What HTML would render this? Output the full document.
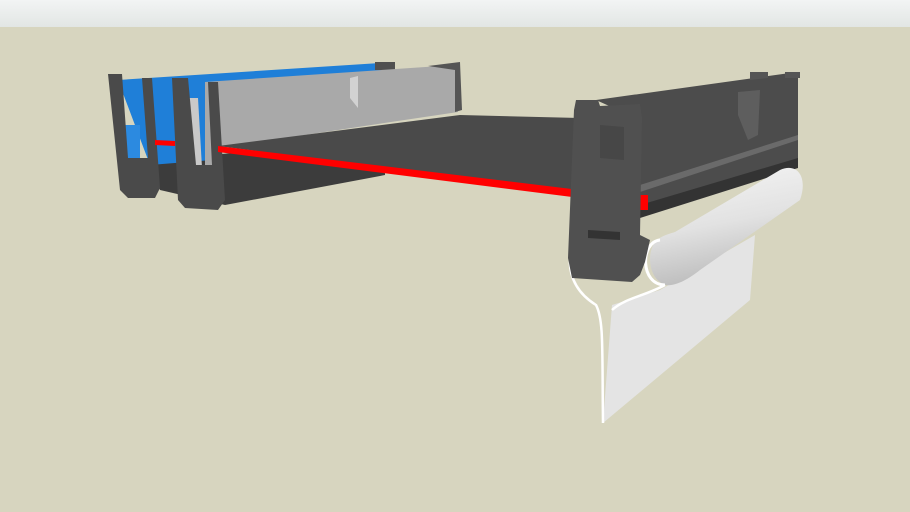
<!DOCTYPE html>
<html><head><style>html,body{margin:0;padding:0;width:910px;height:512px;overflow:hidden;background:#d7d5bf}</style></head>
<body>
<svg width="910" height="512" viewBox="0 0 910 512" xmlns="http://www.w3.org/2000/svg">
<defs>
<linearGradient id="sky" x1="0" y1="0" x2="0" y2="1"><stop offset="0" stop-color="#f2f4f4"/><stop offset="1" stop-color="#e2e6e4"/></linearGradient>
<linearGradient id="tube" x1="0" y1="0" x2="0.25" y2="1"><stop offset="0" stop-color="#f6f6f6"/><stop offset="0.55" stop-color="#e2e2e2"/><stop offset="1" stop-color="#bdbdbd"/></linearGradient>
</defs>
<rect x="0" y="0" width="910" height="27" fill="url(#sky)"/>
<rect x="0" y="27" width="910" height="485" fill="#d7d5bf"/>
<!-- under shadow of trays -->
<polygon points="150,160 385,140 385,175 225,205 160,190" fill="#3c3c3c"/>
<!-- back tray (blue) -->
<polygon points="118,80 395,62 395,75 212,90 212,160 150,165" fill="#1f7fd8"/>
<polygon points="123,125 140,125 140,160 123,162" fill="#2c8ae0"/>
<!-- back tray dark frame -->
<polygon points="108,74 122,74 128,158 148,158 142,78 152,78 160,188 155,198 128,198 120,190" fill="#4a4a4a"/>
<polygon points="375,62 395,62 395,70 375,70" fill="#505050"/>
<!-- middle tray grey -->
<polygon points="205,82 455,65 458,112 218,148 212,168 205,168" fill="#a9a9a9"/>
<polygon points="182,98 198,98 202,168 186,168" fill="#c9c9c9"/>
<polygon points="350,78 358,76 358,108 350,98" fill="#d2d2d2"/>
<polygon points="172,78 188,78 196,165 212,165 208,82 218,82 225,200 218,210 185,208 178,200" fill="#4a4a4a"/>
<polygon points="428,66 460,62 462,110 455,112 455,70" fill="#555"/>
<!-- red edges -->
<polygon points="155,140 175,141 175,146 155,145" fill="#ff0000"/>
<!-- dark sheet -->
<polygon points="218,146 460,115 580,118 580,192" fill="#4a4a4a"/>
<polygon points="218,146 580,190 580,198 218,152" fill="#ff0000"/>
<!-- front box -->
<polygon points="596,100 790,73 798,78 798,165 640,215 640,120" fill="#4c4c4c"/>
<polygon points="640,185 798,135 798,140 640,192" fill="#6a6a6a"/>
<polygon points="640,205 798,158 798,168 640,218" fill="#333"/>
<polygon points="738,92 760,90 758,135 748,140 738,115" fill="#5e5e5e"/>
<polygon points="750,72 768,72 768,78 750,80" fill="#555"/>
<polygon points="785,72 800,72 800,78 785,78" fill="#555"/>
<polygon points="640,195 648,195 648,210 640,210" fill="#ff0000"/>
<!-- white sheet -->
<polygon points="603,423 612,305 660,290 755,235 750,300" fill="#e4e4e4"/>
<path d="M603,423 C602,350 604,320 596,305 C580,295 568,280 570,255" fill="none" stroke="#fff" stroke-width="2.5"/>
<path d="M612,310 C625,298 645,296 665,285" fill="none" stroke="#fff" stroke-width="2.5"/>
<!-- roller tube -->
<path d="M652,248 C655,238 665,235 675,232 L780,170 C798,162 808,178 800,200 L700,270 C685,282 668,290 660,282 C650,275 648,258 652,248 Z" fill="url(#tube)"/>
<path d="M660,240 C640,242 640,285 665,285" fill="none" stroke="#fff" stroke-width="3"/>
<!-- front end piece -->
<polygon points="576,100 598,100 600,106 640,104 642,118 640,235 650,240 645,262 640,275 632,282 572,278 568,258 574,110" fill="#505050"/>
<polygon points="588,230 620,232 620,240 588,238" fill="#333"/>
<polygon points="600,125 624,127 624,160 600,158" fill="#474747"/>
</svg>
</body></html>
